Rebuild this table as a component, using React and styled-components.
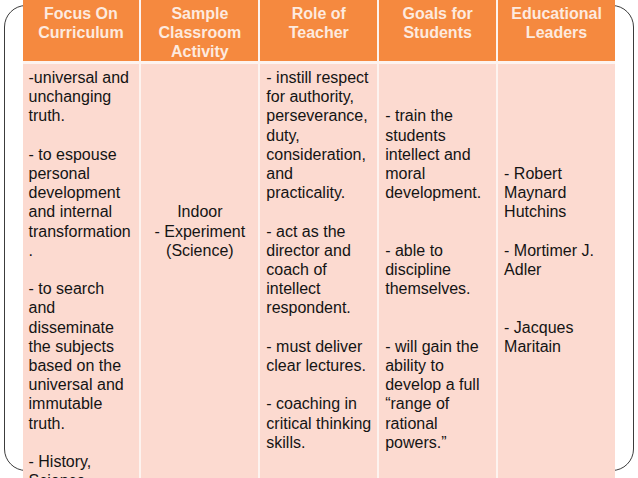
import styled, { createGlobalStyle } from "styled-components";

const GlobalStyle = createGlobalStyle`
  html, body {
    margin: 0;
    padding: 0;
    width: 638px;
    height: 478px;
    overflow: hidden;
    background: #ffffff;
  }
`;

const LINE = 19.2;

const columns = [
  {
    title: "Focus On\nCurriculum",
    skip: 0,
    center: false,
    text:
      "-universal and\nunchanging\ntruth.\n\n- to espouse\npersonal\ndevelopment\nand internal\ntransformation\n.\n\n- to search\nand\ndisseminate\nthe subjects\nbased on the\nuniversal and\nimmutable\ntruth.\n\n- History,\nScience,",
  },
  {
    title: "Sample\nClassroom\nActivity",
    skip: 7,
    center: true,
    text: "Indoor\n-  Experiment\n(Science)",
  },
  {
    title: "Role of\nTeacher",
    skip: 0,
    center: false,
    text:
      "- instill respect\nfor authority,\nperseverance,\nduty,\nconsideration,\nand\npracticality.\n\n- act as the\ndirector and\ncoach of\nintellect\nrespondent.\n\n- must deliver\nclear lectures.\n\n- coaching in\ncritical thinking\nskills.",
  },
  {
    title: "Goals for\nStudents",
    skip: 2,
    center: false,
    text:
      "- train the\nstudents\nintellect and\nmoral\ndevelopment.\n\n\n- able to\ndiscipline\nthemselves.\n\n\n- will gain the\nability to\ndevelop a full\n\u201crange of\nrational\npowers.\u201d",
  },
  {
    title: "Educational\nLeaders",
    skip: 5,
    center: false,
    text: "- Robert\nMaynard\nHutchins\n\n- Mortimer J.\nAdler\n\n\n- Jacques\nMaritain",
  },
];

export default function App() {
  return (
    <>
      <GlobalStyle />
      <Frame>
        <Table>
          {columns.map((col, index) => (
            <HeadCell key={"h" + index}>{col.title}</HeadCell>
          ))}
          {columns.map((col, index) => (
            <BodyCell key={"b" + index} $skip={col.skip} $center={col.center}>
              {col.text}
            </BodyCell>
          ))}
        </Table>
      </Frame>
    </>
  );
}

const Frame = styled.div`
  margin: 5px 4px 0 4px;
  height: 466px;
  box-sizing: border-box;
  border: 1.5px solid #3c3c3c;
  border-radius: 22px;
`;

const Table = styled.div`
  display: grid;
  grid-template-columns: repeat(5, 1fr);
  grid-template-rows: 61px auto;
  column-gap: 2px;
  row-gap: 3px;
  margin: -6.5px 18px 0 17.5px;
  background: #fdf3ef;
`;

const HeadCell = styled.div`
  background: #f5893f;
  color: #fdeadf;
  font-family: "Liberation Sans", Arial, sans-serif;
  font-weight: 700;
  font-size: 16px;
  line-height: ${LINE}px;
  text-align: center;
  white-space: pre-line;
  padding-top: 4.4px;
  box-sizing: border-box;
`;

const BodyCell = styled.div`
  background: #fcdad0;
  color: #141414;
  font-family: "Liberation Sans", Arial, sans-serif;
  font-size: 16px;
  line-height: ${LINE}px;
  white-space: pre-line;
  text-align: ${(p) => (p.$center ? "center" : "left")};
  padding: ${(p) => 4.4 + p.$skip * LINE}px 2px 0 ${(p) => (p.$center ? 2 : 6)}px;
  min-height: 480px;
  box-sizing: border-box;
`;
